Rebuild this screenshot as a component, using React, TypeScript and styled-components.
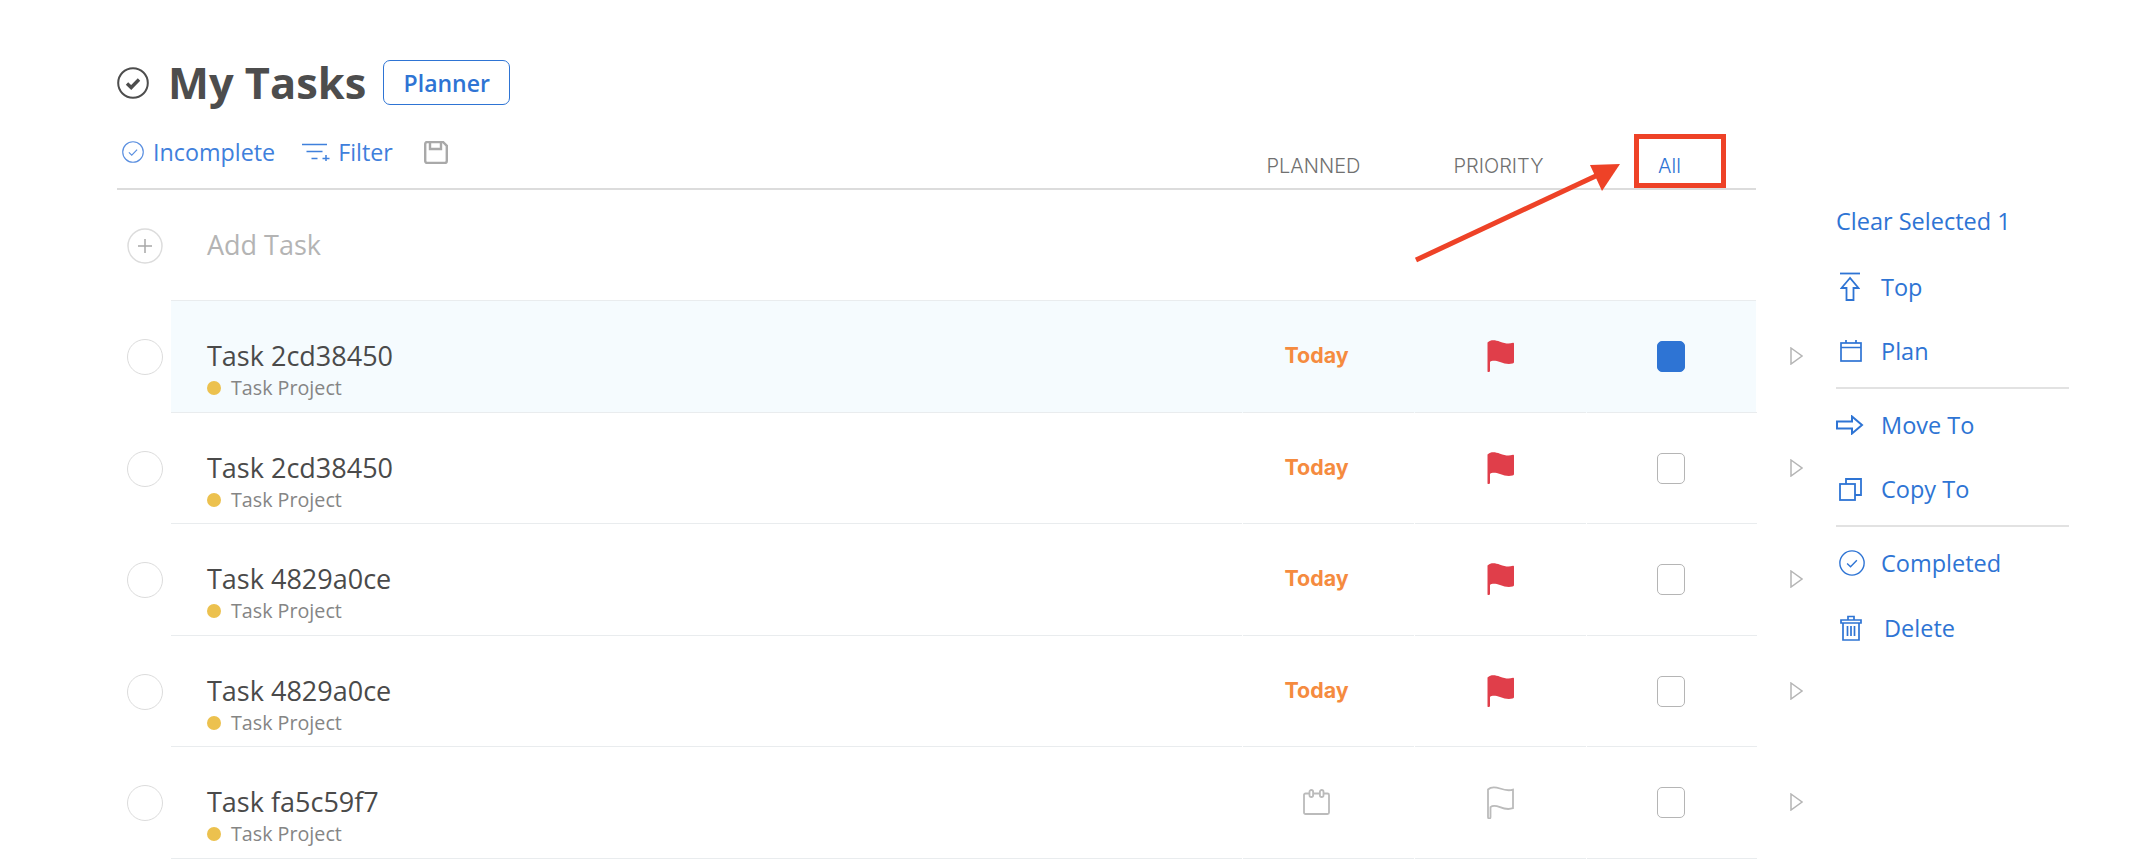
import React from 'react';
import styled, { createGlobalStyle } from 'styled-components';

const BLUE = '#2e74d4';
const LINE = '#e9ecee';

const tasks = [
	{ id: 1, name: 'Task 2cd38450', today: true, selected: true },
	{ id: 2, name: 'Task 2cd38450', today: true, selected: false },
	{ id: 3, name: 'Task 4829a0ce', today: true, selected: false },
	{ id: 4, name: 'Task 4829a0ce', today: true, selected: false },
	{ id: 5, name: 'Task fa5c59f7', today: false, selected: false },
];

const GlobalStyle = createGlobalStyle`
	html, body {
		margin: 0;
		padding: 0;
		background: #fff;
		font-family: 'Open Sans', 'Liberation Sans', sans-serif;
	}
	body {
		height: 864px;
		overflow: hidden;
	}
`;

const CircleCheckIcon = ({ size, stroke, sw, checkSw }: { size: number; stroke: string; sw: number; checkSw: number }) => (
	<svg width={size} height={size} viewBox="0 0 32 32" fill="none">
		<circle cx="16" cy="16" r={16 - sw / 2 - 0.2} stroke={stroke} strokeWidth={sw} />
		<path d="M10 16.500l4.200 4 7.800-8" stroke={stroke} strokeWidth={checkSw} />
	</svg>
);

const FilterIcon = () => (
	<svg width="28" height="18" viewBox="0 0 28 18" fill="none" stroke="#3f80dc" strokeWidth="1.500">
		<path d="M0 1.500h25M4.500 8.500h16M9.500 15.500h6M20.500 15.500h7M24 12v7" />
	</svg>
);

const SaveIcon = () => (
	<svg width="24" height="23" viewBox="0 0 24 23" fill="none" stroke="#a9a9a9" strokeWidth="2.400">
		<path d="M1.200 3a2 2 0 0 1 2-2h15.800l3.800 3.800V20a2 2 0 0 1-2 2H3.200a2 2 0 0 1-2-2z" />
		<path d="M6 1v7h11V1" />
	</svg>
);

const TopIcon = () => (
	<svg width="20" height="30" viewBox="0 0 20 30" fill="none" stroke={BLUE} strokeWidth="1.800">
		<path d="M0 1.500h20" />
		<path d="M10 6l-8.500 10h5v12h7V16h5z" />
	</svg>
);

const PlanIcon = () => (
	<svg width="22" height="22" viewBox="0 0 22 22" fill="none" stroke={BLUE} strokeWidth="1.700">
		<rect x="1" y="3" width="20" height="18" />
		<path d="M1 7.500h20M6 0v3M16 0v3" />
	</svg>
);

const MoveIcon = () => (
	<svg width="28" height="20" viewBox="0 0 28 20" fill="none" stroke={BLUE} strokeWidth="2">
		<path d="M1 6.500h15V1.500L26 10l-10 8.500v-5H1z" />
	</svg>
);

const CopyIcon = () => (
	<svg width="23" height="23" viewBox="0 0 23 23" fill="none" stroke={BLUE} strokeWidth="1.800">
		<rect x="1" y="6" width="15" height="16" />
		<path d="M7 6V1h15v16h-6" />
	</svg>
);

const TrashIcon = () => (
	<svg width="22" height="26" viewBox="0 0 22 26" fill="none" stroke={BLUE} strokeWidth="1.700">
		<path d="M1 5h20v3H1zM8 5V1.500h6V5M3 8v17h16V8M7.500 11v10M11 11v10M14.500 11v10" />
	</svg>
);

const FlagIcon = ({ filled }: { filled: boolean }) =>
	filled ? (
		<svg width="27" height="32" viewBox="0 0 27 32">
			<path
				d="M0.500 2.500C4 -0.500 8 0 13 1.800c5 1.800 9 2.400 13 1 .6 0 1 .4 1 1v18c0 1-.5 1.500-1.500 1.800-4 1-8 .2-12.500-1.500-4-1.500-8-1.800-10 -.2V30.500c0 1-.6 1.500-1.500 1.500S0.500 31.500 0.500 30.500z"
				fill="#e03e4a"
			/>
		</svg>
	) : (
		<svg width="27" height="33" viewBox="0 0 27 33" fill="none" stroke="#bbb" strokeWidth="1.800">
			<path d="M1 3.500C4 .5 8 .8 13 2.500c5 1.800 9 2.400 13 1.200v18.500c-4 1.400-8.500.8-13-1-4-1.500-7.500-1.800-9.500 0v9.800c0 1-.5 1.500-1.200 1.500S1 32 1 31z" />
		</svg>
	);

const CalendarIcon = () => (
	<svg width="27" height="26" viewBox="0 0 27 26" fill="none" stroke="#bbb" strokeWidth="1.800">
		<rect x="1" y="4.500" width="25" height="20.500" rx="1.500" />
		<rect x="6.500" y="1" width="3.600" height="7" rx="1.800" fill="#fff" />
		<rect x="16.900" y="1" width="3.600" height="7" rx="1.800" fill="#fff" />
	</svg>
);

const ChevronIcon = () => (
	<svg width="13" height="18" viewBox="0 0 13 18" fill="none" stroke="#b5b5b5" strokeWidth="1.500">
		<path d="M1 1l11 8-11 8z" />
	</svg>
);

const AddTaskIcon = () => (
	<svg width="36" height="36" viewBox="0 0 36 36" fill="none" stroke="#c4c4c4" strokeWidth="1.500">
		<circle cx="18" cy="18" r="17" stroke="#dcdcdc" />
		<path d="M18 11v14M11 18h14" stroke="#a8a8a8" />
	</svg>
);

const App: React.FunctionComponent = () => (
	<Page>
		<GlobalStyle />
		<Header>
			<TitleRow>
				<CircleCheckIcon size={32} stroke="#4d4d4d" sw={2} checkSw={3.4} />
				<Title>My Tasks</Title>
				<PlannerButton>Planner</PlannerButton>
			</TitleRow>
			<ToolRow>
				<ToolLinks>
					<ToolLink $gap={9}>
						<CircleCheckIcon size={22} stroke="#5a8fe0" sw={1.700} checkSw={1.700} />
						Incomplete
					</ToolLink>
					<ToolLink $gap={8}>
						<FilterIcon />
						Filter
					</ToolLink>
					<SaveSlot>
						<SaveIcon />
					</SaveSlot>
				</ToolLinks>
				<ColumnHead $shift={28}>PLANNED</ColumnHead>
				<ColumnHead>PRIORITY</ColumnHead>
				<ColumnHead $active>All</ColumnHead>
			</ToolRow>
		</Header>
		<Content>
			<TaskList>
				<AddRow>
					<CircleCell>
						<AddTaskIcon />
					</CircleCell>
					<AddLabel>Add Task</AddLabel>
				</AddRow>
				{tasks.map(
					(task): JSX.Element => (
						<TaskRow key={task.id}>
							<CircleCell>
								<TaskCircle />
							</CircleCell>
							<TaskBody $selected={task.selected}>
								<NameCell>
									<TaskName>{task.name}</TaskName>
									<ProjectLine>
										<ProjectDot />
										Task Project
									</ProjectLine>
								</NameCell>
								<ColumnCell $shift={24}>
									{task.today ? (
										<TodayLabel>Today</TodayLabel>
									) : (
										<CalendarSlot>
											<CalendarIcon />
										</CalendarSlot>
									)}
								</ColumnCell>
								<ColumnCell>
									<FlagIcon filled={task.today} />
								</ColumnCell>
								<ColumnCell $shift={3}>
									<CheckBox $checked={task.selected} />
								</ColumnCell>
							</TaskBody>
							<ChevronCell>
								<ChevronIcon />
							</ChevronCell>
						</TaskRow>
					),
				)}
			</TaskList>
			<Actions>
				<ClearItem>Clear Selected 1</ClearItem>
				<ActionItem>
					<ActionIcon $offset={4}>
						<TopIcon />
					</ActionIcon>
					Top
				</ActionItem>
				<ActionItem>
					<ActionIcon $offset={4}>
						<PlanIcon />
					</ActionIcon>
					Plan
				</ActionItem>
				<ActionDivider />
				<ActionItem>
					<ActionIcon>
						<MoveIcon />
					</ActionIcon>
					Move To
				</ActionItem>
				<ActionItem>
					<ActionIcon $offset={3}>
						<CopyIcon />
					</ActionIcon>
					Copy To
				</ActionItem>
				<ActionDivider />
				<ActionItem>
					<ActionIcon $offset={3}>
						<CircleCheckIcon size={26} stroke={BLUE} sw={1.700} checkSw={1.700} />
					</ActionIcon>
					Completed
				</ActionItem>
				<ActionItem>
					<ActionIcon $offset={4} $extra={3}>
						<TrashIcon />
					</ActionIcon>
					Delete
				</ActionItem>
			</Actions>
		</Content>
		<HighlightBox />
		<ArrowOverlay width="2142" height="864" viewBox="0 0 2142 864">
			<path d="M1416 260L1600 174" stroke="#ee4227" strokeWidth="5" />
			<path d="M1620 164L1590 165L1602 191z" fill="#ee4227" />
		</ArrowOverlay>
	</Page>
);

const Page = styled.div`
	position: relative;
	width: 2142px;
	height: 864px;
	overflow: hidden;
	background: #fff;
`;

const Header = styled.header`
	margin-left: 117px;
	width: 1639px;
	height: 190px;
	box-sizing: border-box;
	padding-top: 60px;
	border-bottom: 2px solid #dcdcdc;
`;

const TitleRow = styled.div`
	display: flex;
	align-items: center;
	height: 45px;
`;

const Title = styled.h1`
	margin: 0 17px 0 19px;
	font-size: 43.400px;
	font-weight: 700;
	line-height: 45px;
	color: #4d4d4d;
`;

const PlannerButton = styled.button`
	width: 127px;
	height: 45px;
	padding: 0;
	background: #fff;
	border: 1.500px solid ${BLUE};
	border-radius: 7px;
	font-family: inherit;
	font-size: 23px;
	font-weight: 600;
	color: ${BLUE};
`;

const ToolRow = styled.div`
	display: grid;
	grid-template-columns: 1125px 171px 171px 171px;
	margin-top: 35px;
`;

const ToolLinks = styled.div`
	display: flex;
	align-items: center;
	gap: 27px;
	height: 24px;
	padding-left: 5px;
`;

const SaveSlot = styled.span`
	display: flex;
	margin-left: 4px;
`;

const ToolLink = styled.span<{ $gap: number }>`
	display: flex;
	align-items: center;
	gap: ${(props) => props.$gap}px;
	font-size: 23.300px;
	color: #3f80dc;
`;

const ColumnHead = styled.div<{ $shift?: number; $active?: boolean }>`
	box-sizing: border-box;
	padding-right: ${(props) => props.$shift || 0}px;
	padding-top: 15px;
	text-align: center;
	font-family: 'Inter', 'Liberation Sans', sans-serif;
	font-size: 20px;
	font-weight: 300;
	line-height: 22px;
	color: ${(props) => (props.$active ? BLUE : '#707070')};
`;

const Content = styled.main`
	display: flex;
	align-items: flex-start;
	padding-left: 117px;
`;

const TaskList = styled.div`
	width: 1719px;
`;

const AddRow = styled.div`
	display: grid;
	grid-template-columns: 54px 1fr 80px;
	height: 111px;
	align-items: center;
`;

const CircleCell = styled.div`
	display: flex;
	align-items: flex-start;
	padding-left: 10px;
`;

const AddLabel = styled.div`
	grid-column: 2;
	height: 111px;
	box-sizing: border-box;
	padding-left: 36px;
	border-bottom: 1px solid ${LINE};
	font-size: 27px;
	line-height: 110px;
	color: #b4b4b4;
`;

const TaskRow = styled.div`
	display: grid;
	grid-template-columns: 54px 1585px 80px;
	height: 111.600px;

	${CircleCell} {
		padding-top: 38px;
	}
`;

const TaskCircle = styled.span`
	display: block;
	width: 36px;
	height: 36px;
	box-sizing: border-box;
	border: 1.500px solid #dcdcdc;
	border-radius: 50%;
`;

const TaskBody = styled.div<{ $selected: boolean }>`
	display: grid;
	grid-template-columns: 1071px 171px 171px 170px;
	column-gap: 1px;
	background: ${(props) => (props.$selected ? '#f5fbfe' : '#fff')};
`;

const NameCell = styled.div`
	padding: 37px 0 0 36px;
	border-bottom: 1px solid ${LINE};
`;

const TaskName = styled.div`
	font-size: 27px;
	line-height: 36px;
	color: #4a4a4a;
`;

const ProjectLine = styled.div`
	display: flex;
	align-items: center;
	gap: 10px;
	margin-top: 2px;
	font-size: 19.700px;
	line-height: 24px;
	color: #858585;
`;

const ProjectDot = styled.span`
	width: 14px;
	height: 14px;
	border-radius: 50%;
	background: #ecc14e;
`;

const ColumnCell = styled.div<{ $shift?: number }>`
	display: flex;
	justify-content: center;
	align-items: flex-start;
	box-sizing: border-box;
	padding-right: ${(props) => props.$shift || 0}px;
	padding-top: 39px;
	border-bottom: 1px solid ${LINE};
`;

const CalendarSlot = styled.span`
	display: flex;
	margin-top: 3px;
`;

const TodayLabel = styled.span`
	margin-top: -1px;
	font-family: 'Inter', 'Liberation Sans', sans-serif;
	font-size: 21.400px;
	font-weight: 700;
	line-height: 32px;
	color: #f58b3f;
`;

const CheckBox = styled.span<{ $checked: boolean }>`
	display: block;
	width: 28px;
	height: 31px;
	margin-top: 1px;
	box-sizing: border-box;
	border-radius: 5px;
	border: 1px solid ${(props) => (props.$checked ? BLUE : '#b5b5b5')};
	background: ${(props) => (props.$checked ? BLUE : '#fff')};
`;

const ChevronCell = styled.div`
	display: flex;
	justify-content: center;
	padding-top: 46px;
`;

const Actions = styled.aside`
	width: 233px;
	flex-shrink: 0;
	color: ${BLUE};
`;

const ActionItem = styled.div`
	display: flex;
	align-items: center;
	height: 64px;
	font-size: 23.500px;
	color: ${BLUE};

	&:last-child {
		margin-top: 1px;
	}
`;

const ClearItem = styled(ActionItem)`
	height: 62px;
	margin-bottom: 3px;
`;

const ActionIcon = styled.span<{ $offset?: number; $extra?: number }>`
	display: flex;
	box-sizing: border-box;
	width: ${(props) => 45 + (props.$extra || 0)}px;
	padding-left: ${(props) => props.$offset || 0}px;
`;

const ActionDivider = styled.div`
	height: 2px;
	margin: 4px 0;
	background: #e2e2e2;
`;

const HighlightBox = styled.div`
	position: absolute;
	left: 1634px;
	top: 134px;
	width: 92px;
	height: 54px;
	box-sizing: border-box;
	border: 5px solid #ee4227;
`;

const ArrowOverlay = styled.svg`
	position: absolute;
	left: 0;
	top: 0;
	pointer-events: none;
`;

export default App;
